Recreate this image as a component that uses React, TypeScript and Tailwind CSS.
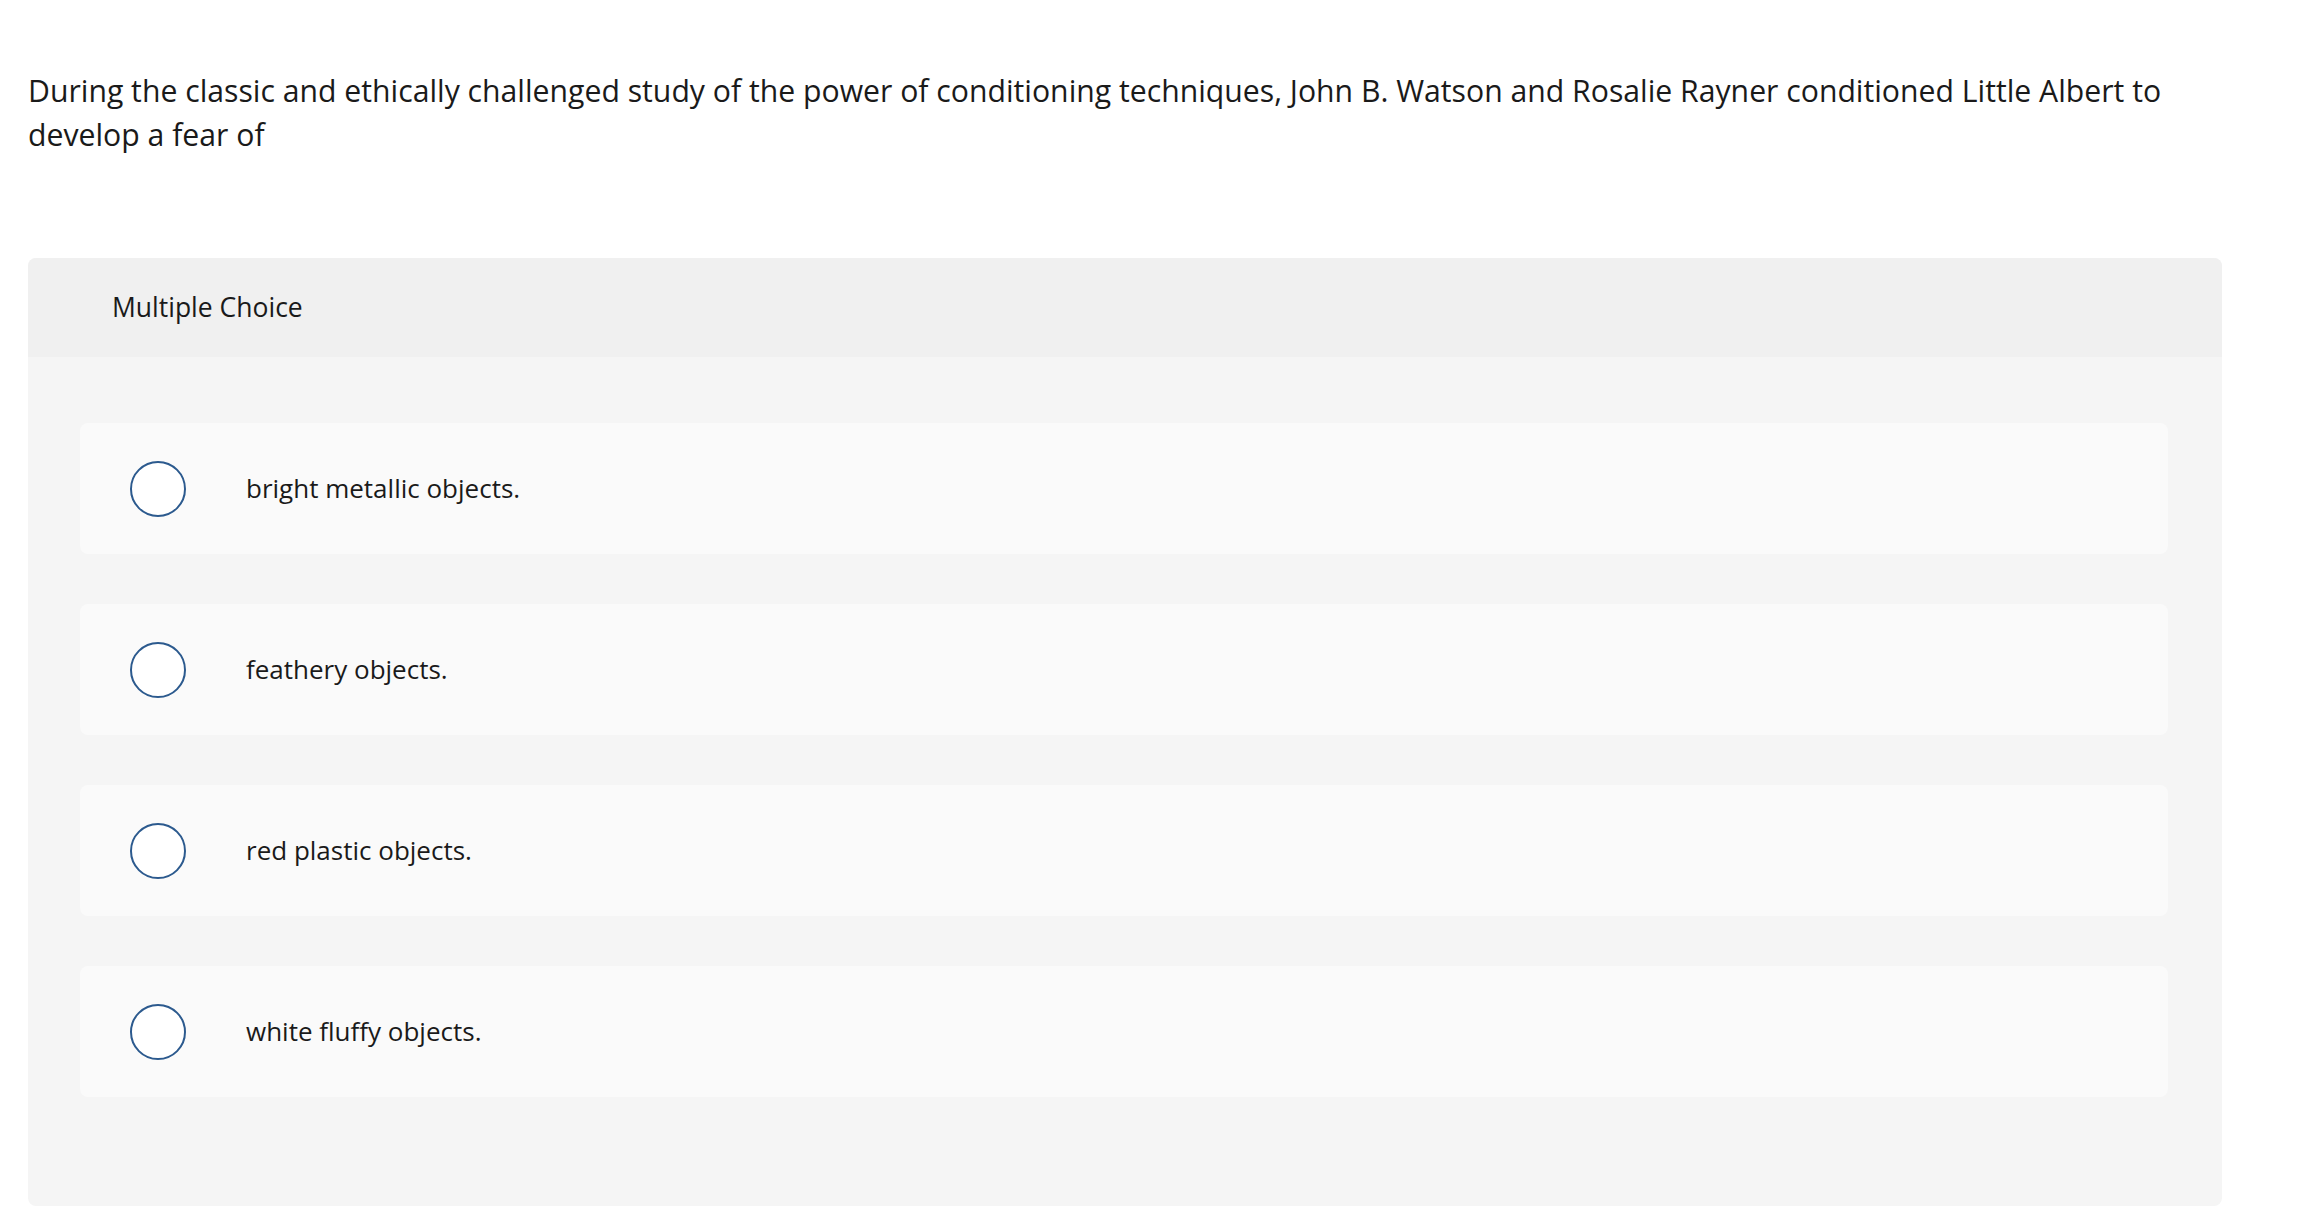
const OPTIONS = [
  "bright metallic objects.",
  "feathery objects.",
  "red plastic objects.",
  "white fluffy objects.",
];

function Option({ label }: { label: string }) {
  return (
    <div className="flex h-[131px] items-center rounded-lg bg-[#fafafa] pl-[50px]">
      <div className="h-[56px] w-[56px] shrink-0 rounded-full border-2 border-[#2c5a8e] bg-white" />
      <span className="ml-[60px] text-[26px] text-[#1a1a1a]">{label}</span>
    </div>
  );
}

export default function App() {
  return (
    <div
      className="min-h-screen bg-white pt-[69px] pl-[28px] pr-[90px]"
      style={{ fontFamily: '"Open Sans", "Liberation Sans", sans-serif' }}
    >
      <p className="text-[30.2px] leading-[44px] text-[#1a1a1a]">
        During the classic and ethically challenged study of the power of conditioning techniques, John B. Watson and
        Rosalie Rayner conditioned Little Albert to develop a fear of
      </p>

      <div className="mt-[101px] overflow-hidden rounded-lg bg-[#f5f5f5]">
        <div className="flex h-[99px] items-center bg-[#f0f0f0] pl-[84px]">
          <span className="text-[26.5px] text-[#1a1a1a]">Multiple Choice</span>
        </div>
        <div className="flex flex-col gap-[50px] pl-[52px] pr-[54px] pt-[66px] pb-[109px]">
          {OPTIONS.map((o) => (
            <Option key={o} label={o} />
          ))}
        </div>
      </div>
    </div>
  );
}
